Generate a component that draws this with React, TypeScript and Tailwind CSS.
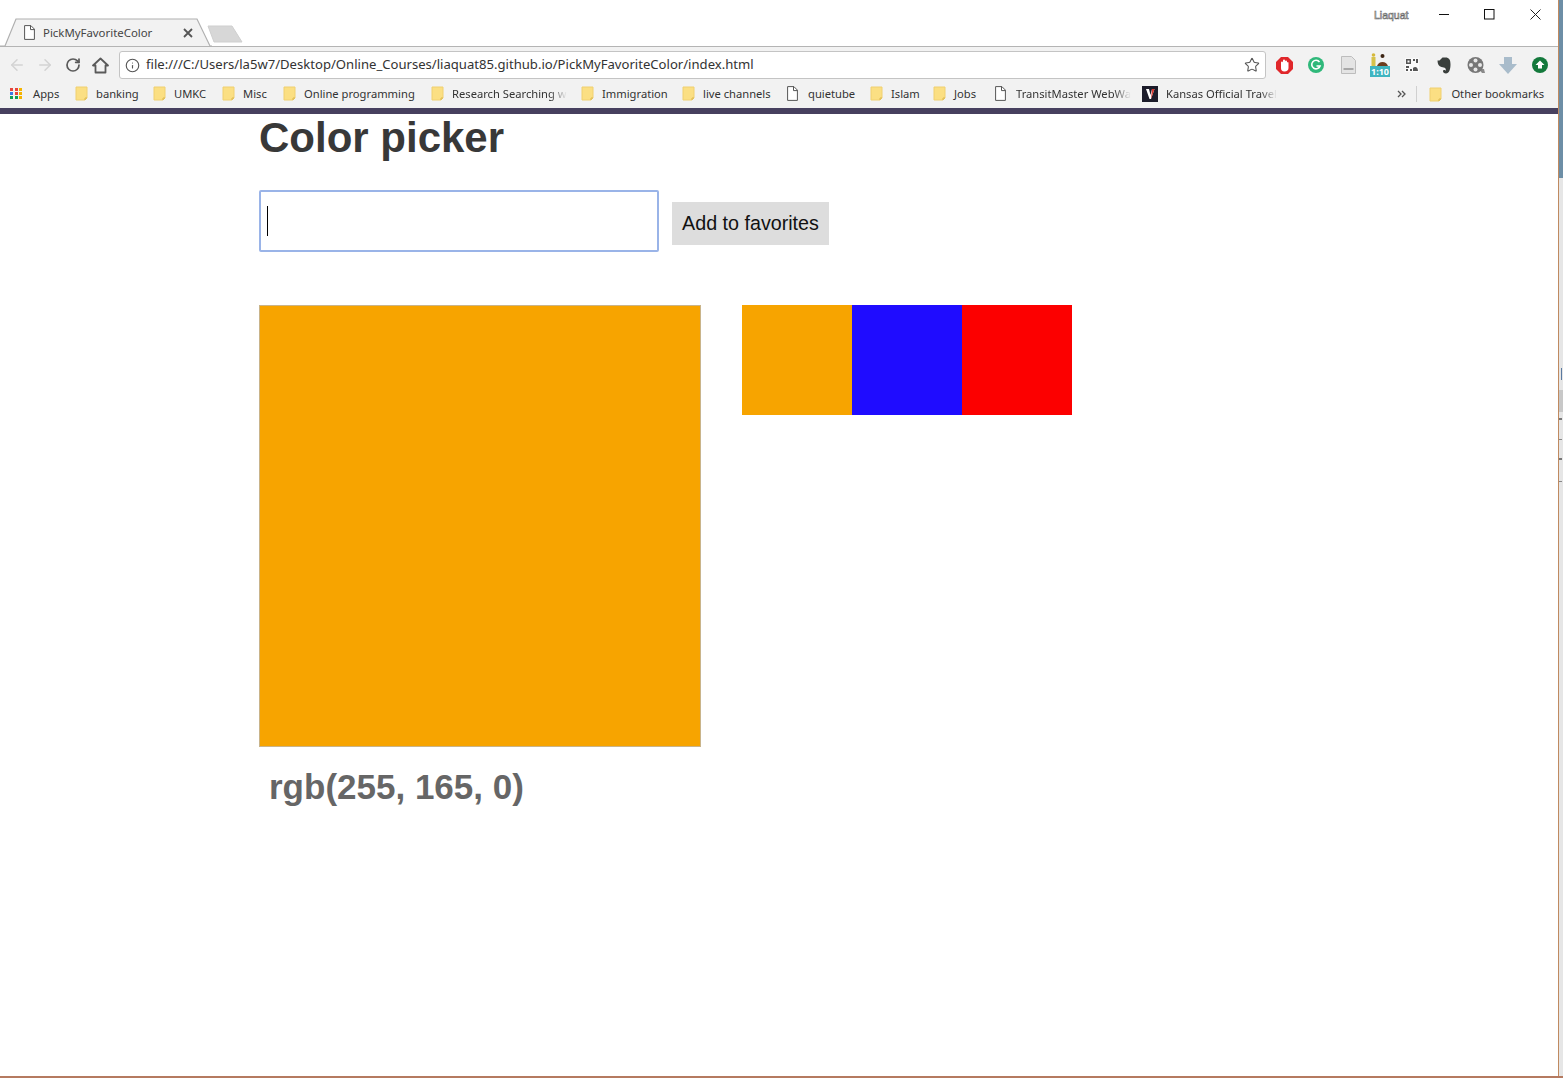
import React from "react";
import { ArrowLeft, ArrowRight, Info, RotateCw, Star } from "lucide-react";

type Bookmark = {
  label: string;
  icon: "folder" | "page" | "v";
  width: string;
  fade?: boolean;
};

const bookmarks: Bookmark[] = [
  { label: "banking", icon: "folder", width: "w-[78px]" },
  { label: "UMKC", icon: "folder", width: "w-[69px]" },
  { label: "Misc", icon: "folder", width: "w-[61px]" },
  { label: "Online programming", icon: "folder", width: "w-[148px]" },
  { label: "Research Searching w", icon: "folder", width: "w-[150px]", fade: true },
  { label: "Immigration", icon: "folder", width: "w-[101px]" },
  { label: "live channels", icon: "folder", width: "w-[105px]" },
  { label: "quietube", icon: "page", width: "w-[83px]" },
  { label: "Islam", icon: "folder", width: "w-[63px]" },
  { label: "Jobs", icon: "folder", width: "w-[62px]" },
  { label: "TransitMaster WebWa", icon: "page", width: "w-[147px]", fade: true },
  { label: "Kansas Official Travel", icon: "v", width: "w-[136px]", fade: true },
];

function Folder() {
  return (
    <svg width="13" height="15" viewBox="0 0 13 15" className="shrink-0">
      <path d="M1 1h11v11l-2 2H1z" fill="#fbdf83" stroke="#f0d070" strokeWidth="1" />
      <path d="M10 14v-2h2" fill="none" stroke="#dcb950" strokeWidth="1" />
    </svg>
  );
}

function PageIcon() {
  return (
    <svg width="11" height="15" viewBox="0 0 11 15" className="shrink-0">
      <path d="M.6.600h6.300l3.500 3.500v10.300H.6z" fill="#fff" stroke="#555" strokeWidth="1" />
      <path d="M6.500.600v4h4" fill="none" stroke="#555" strokeWidth="1" />
    </svg>
  );
}

function AppsIcon() {
  const colors = ["#e8453c", "#e8453c", "#f4b400", "#3b78e7", "#e8453c", "#f4b400", "#0f9d58", "#0f9d58", "#f4b400"];
  return (
    <div className="grid grid-cols-3 gap-px w-[13px] shrink-0">
      {colors.map((c, ix) => (
        <span key={ix} className="w-[3px] h-[3px]" style={{ background: c }} />
      ))}
    </div>
  );
}

function BookmarkIcon({ icon }: { icon: Bookmark["icon"] }) {
  if (icon === "folder") return <Folder />;
  if (icon === "page") return <PageIcon />;
  return (
    <svg width="16" height="16" viewBox="0 0 16 16" className="shrink-0">
      <rect width="16" height="16" fill="#1c1c2a" />
      <path d="M4 3h3l1.500 6L10 3h2.500L9 13H7.500z" fill="#fff" />
      <path d="M10 3h2.500L9 13z" fill="#d8342c" />
    </svg>
  );
}

function Extensions() {
  return (
    <div className="flex items-center ml-[2px]">
      <div className="flex justify-center w-[32px]">
        <svg width="17" height="17" viewBox="0 0 17 17">
          <path d="M5 0h7l5 5v7l-5 5H5l-5-5V5z" fill="#e0272b" />
          <path d="M5 5.500a1 1 0 0 1 2 0V3.500a1 1 0 0 1 2 0v1a1 1 0 0 1 2 0v1a1 1 0 0 1 1.500 0V11c0 2-1.500 3.500-4 3.500S5 13 5 11z" fill="#fff" />
        </svg>
      </div>
      <div className="flex justify-center w-[32px]">
        <svg width="16" height="16" viewBox="0 0 16 16">
          <circle cx="8" cy="8" r="8" fill="#2fb87a" />
          <path d="M11.500 5a4.300 4.300 0 1 0 .6 4H8.500" fill="none" stroke="#fff" strokeWidth="1.600" />
        </svg>
      </div>
      <div className="flex justify-center w-[32px]">
        <svg width="15" height="18" viewBox="0 0 15 18">
          <path d="M.5.500h10l4 4v13H.5z" fill="#e4e4e4" stroke="#bdbdbd" />
          <rect x="2.500" y="12" width="10" height="2" fill="#a8a8a8" />
        </svg>
      </div>
      <div className="flex justify-center w-[32px]">
        <div className="relative w-[20px] h-[24px] -mt-[1px]">
          <svg width="18" height="13" viewBox="0 0 18 13" className="absolute left-0 top-0">
            <circle cx="3.500" cy="2" r="1.800" fill="#d6b93c" />
            <rect x="1.500" y="4" width="4" height="9" fill="#d6c24a" />
            <path d="M7 13a6 6.500 0 0 1 11 0z" fill="#6b3d1e" />
            <circle cx="12.500" cy="3" r="2" fill="#3c2413" />
          </svg>
          <span className="absolute left-0 bottom-0 w-[20px] h-[11px] bg-[#3fb5c0] text-white text-[9px] leading-[11px] text-center font-bold">
            1:10
          </span>
        </div>
      </div>
      <div className="flex justify-center w-[32px]">
        <svg width="14" height="14" viewBox="0 0 14 14">
          <rect width="14" height="14" fill="#fafafa" />
          <path d="M1 1h5v5H1zM8 1h2v2H8zM11 1h2v4h-2zM1 8h3v2H1zM5 11h2v2H5zM1 11h2v2H1zM8 10c2-2 5-1 5 3H8z" fill="#555" />
          <path d="M2.500 2.500h2v2h-2z" fill="#fafafa" />
        </svg>
      </div>
      <div className="flex justify-center w-[32px]">
        <svg width="14" height="17" viewBox="0 0 14 17">
          <path d="M2.500 3.500 5.500.5h3c3.500 0 5 2 5 7 0 5-1.500 9-4.500 9-2 0-3-1-3-2.500 0-1.200 2.500-1.500 2.500 0-.5 0 1-.5 0-2.500-1-1.500-2.500-1-4-1.500C2 9.500.5 7 .5 3.500z" fill="#3a3f3c" />
        </svg>
      </div>
      <div className="flex justify-center w-[32px]">
        <svg width="19" height="18" viewBox="0 0 19 18">
          <path d="M12 13h5l1 4h-3z" fill="#8a8a8a" />
          <circle cx="8.500" cy="9" r="8" fill="#777" />
          <circle cx="8.500" cy="4.500" r="2" fill="#e8e8e8" />
          <circle cx="4" cy="9" r="2" fill="#e8e8e8" />
          <circle cx="13" cy="9" r="2" fill="#e8e8e8" />
          <circle cx="8.500" cy="13.500" r="2" fill="#e8e8e8" />
        </svg>
      </div>
      <div className="flex justify-center w-[32px]">
        <svg width="18" height="17" viewBox="0 0 18 17">
          <path d="M5 0h8v7h5l-9 10L0 7h5z" fill="#a9bccb" />
        </svg>
      </div>
      <div className="flex justify-center w-[32px]">
        <svg width="16" height="16" viewBox="0 0 16 16">
          <circle cx="8" cy="8" r="8" fill="#14793c" />
          <path d="M8 3.500 12.500 8H10v3.500H6V8H3.500z" fill="#fff" />
        </svg>
      </div>
    </div>
  );
}

function Toolbar() {
  return (
    <div className="flex items-center h-[35px] bg-[#f2f2f2] pl-[8px] pt-[1px] shrink-0">
      <ArrowLeft size={18} strokeWidth={2} className="text-[#d3d3d3] w-[18px]" />
      <ArrowRight size={18} strokeWidth={2} className="text-[#d3d3d3] ml-[10px]" />
      <RotateCw size={16} strokeWidth={2.6} className="text-[#5a5a5a] ml-[11px]" />
      <svg width="17" height="17" viewBox="0 0 17 17" className="ml-[11px]">
        <path d="M8.500 1.500 1 8.500h2.500v7h10v-7H16z" fill="none" stroke="#5a5a5a" strokeWidth="1.800" strokeLinejoin="round" />
      </svg>
      <div className="flex items-center ml-[10px] w-[1147px] h-[28px] bg-white border border-[#c4c4c4] rounded-[3px] pl-[5px] pr-[5px]">
        <Info size={15} strokeWidth={1.8} className="text-[#555]" />
        <span className="ml-[6px] text-[13.100px] text-[#333] whitespace-nowrap">
          file:///C:/Users/la5w7/Desktop/Online_Courses/liaquat85.github.io/PickMyFavoriteColor/index.html
        </span>
        <Star size={16} strokeWidth={1.6} className="text-[#555] ml-auto" />
      </div>
      <Extensions />
    </div>
  );
}

function BookmarksBar() {
  return (
    <div className="flex items-center h-[26px] bg-[#f2f2f2] pl-[10px] pr-[19px] pb-[2px] text-[11.200px] text-[#333] shrink-0">
      <div className="flex items-center w-[65px]">
        <AppsIcon />
        <span className="ml-[10px]">Apps</span>
      </div>
      {bookmarks.map((b) => (
        <div key={b.label} className={`flex items-center whitespace-nowrap ${b.width}`}>
          <BookmarkIcon icon={b.icon} />
          <span className={`${b.icon === "page" ? "ml-[10px]" : "ml-[8px]"} ${b.fade ? "[mask-image:linear-gradient(to_right,black_85%,transparent_100%)]" : ""}`}>
            {b.label}
          </span>
        </div>
      ))}
      <svg width="9" height="8" viewBox="0 0 9 8" className="ml-auto">
        <path d="M1 1l3 3-3 3M5 1l3 3-3 3" fill="none" stroke="#555" strokeWidth="1.300" />
      </svg>
      <span className="w-px h-[16px] bg-[#d0d0d0] ml-[10px] mr-[12px]" />
      <Folder />
      <span className="ml-[9px] whitespace-nowrap">Other bookmarks</span>
    </div>
  );
}

function TitleBar() {
  return (
    <div className="relative h-[47px] bg-white border-b border-[#b4b4b4] shrink-0">
      <svg width="212" height="29" viewBox="0 0 212 29" className="absolute left-0 top-[18px]">
        <path d="M0 28h5L16 1h181l13 27h2" fill="#f2f2f2" stroke="#b0b0b0" strokeWidth="1.200" />
      </svg>
      <svg width="36" height="18" viewBox="0 0 36 18" className="absolute left-[207px] top-[25px]">
        <path d="M1 1h24l10 16H7z" fill="#d7d7d7" stroke="#cfcfcf" strokeLinejoin="round" />
      </svg>
      <div className="absolute left-[24px] top-[25px]">
        <PageIcon />
      </div>
      <span className="absolute left-[43px] top-[25px] text-[11.400px] leading-[16px] text-[#444]">PickMyFavoriteColor</span>
      <svg width="10" height="10" viewBox="0 0 10 10" className="absolute left-[183px] top-[28px]">
        <path d="M1 1l8 8M9 1l-8 8" stroke="#555" strokeWidth="1.800" />
      </svg>
      <span className="absolute left-[1374px] top-[7px] text-[10.500px] leading-[16px] text-white [-webkit-text-stroke:0.6px_#666] font-['Liberation_Sans',sans-serif]">
        Liaquat
      </span>
      <svg width="11" height="11" viewBox="0 0 11 11" className="absolute left-[1439px] top-[9px]">
        <path d="M0 5.500h10" stroke="#111" strokeWidth="1" />
      </svg>
      <svg width="11" height="11" viewBox="0 0 11 11" className="absolute left-[1484px] top-[9px]">
        <rect x=".5" y=".5" width="9.500" height="9.500" fill="none" stroke="#111" strokeWidth="1" />
      </svg>
      <svg width="11" height="11" viewBox="0 0 11 11" className="absolute left-[1530px] top-[9px]">
        <path d="M.5.500l10 10M10.500.500l-10 10" stroke="#222" strokeWidth="1" />
      </svg>
    </div>
  );
}

export default function App() {
  return (
    <div className="relative flex flex-col w-[1563px] h-[1078px] bg-white overflow-hidden font-['Noto_Sans',sans-serif]">
      <TitleBar />
      <Toolbar />
      <BookmarksBar />
      <div className="h-[6px] bg-[#47405f] shrink-0" />

      <main className="flex-grow pl-[259px] font-['Liberation_Sans',Arial,sans-serif]">
        <h1 className="text-[42px] leading-[48px] font-bold text-[#383838]">Color picker</h1>

        <div className="flex items-start mt-[28px]">
          <div className="flex items-center w-[400px] h-[62px] bg-white border-2 border-[#9ab4e8] rounded-[2px] pl-[6px]">
            <span className="w-px h-[30px] bg-black" />
          </div>
          <button className="ml-[13px] mt-[12px] w-[157px] h-[43px] bg-[#dddddd] text-[19.700px] text-[#111]">
            Add to favorites
          </button>
        </div>

        <div className="flex items-start mt-[53px]">
          <div className="w-[442px] h-[442px] bg-[#f7a400] border border-[#c9b48a]" />
          <div className="flex ml-[41px]">
            <div className="w-[110px] h-[110px] bg-[#f7a400]" />
            <div className="w-[110px] h-[110px] bg-[#1f0cff]" />
            <div className="w-[110px] h-[110px] bg-[#fc0000]" />
          </div>
        </div>

        <p className="mt-[19px] pl-[10px] text-[35px] leading-[42px] font-bold text-[#666]">rgb(255, 165, 0)</p>
      </main>

      {/* bit of the window behind, on the right and bottom edges */}
      <div className="absolute right-0 top-0 bottom-0 flex flex-col w-[5px] bg-[#e6e6e6] border-l border-[#c08a60]">
        <div className="h-[178px] bg-[#6d8ea6] shrink-0" />
        <div className="w-[3px] h-[12px] mt-[190px] border-r border-[#5a7aa0]" />
        <div className="h-[22px] mt-[10px] bg-[#c8c8c8]" />
        <div className="w-[3px] h-[2px] mt-[6px] bg-[#777]" />
        <div className="w-[3px] h-[8px] mt-[12px] border-b border-[#888]" />
        <div className="w-[3px] h-[2px] mt-[18px] bg-[#777]" />
        <div className="w-[3px] h-[8px] mt-[14px] border-b border-[#888]" />
      </div>
      <div className="absolute left-0 right-0 bottom-0 h-[2px] bg-[#b57a60]" />
    </div>
  );
}
